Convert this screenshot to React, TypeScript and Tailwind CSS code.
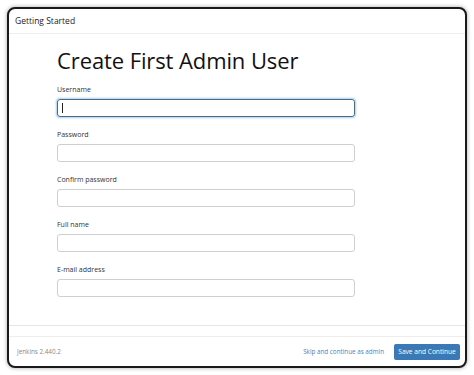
import React from "react";

const fields = [
  { label: "Username", focused: true },
  { label: "Password" },
  { label: "Confirm password" },
  { label: "Full name" },
  { label: "E-mail address" },
];

export default function App() {
  return (
    <div
      className="w-[474px] h-[375px] bg-white p-[7px]"
      style={{ fontFamily: '"Open Sans", "Noto Sans", sans-serif' }}
    >
      <div className="h-full border-2 border-[#1a1a1a] rounded-[8px] flex flex-col overflow-hidden shadow-[0_0_4px_rgba(0,0,0,0.35)] bg-white">
        <div className="h-[25px] shrink-0 border-b border-[#eeeeee] px-[6px] flex items-center text-[8.5px] text-[#222]">
          Getting Started
        </div>
        <div className="flex-1 border-b border-[#e6e6e6] pl-[48px] pt-[8px]">
          <div className="h-[36px] leading-[36px] text-[22px] text-[#111] tracking-[-0.1px]">
            Create First Admin User
          </div>
          <div className="mt-[7px] flex flex-col">
            {fields.map((f) => (
              <div key={f.label} className="mb-[13px] w-[298px]">
                <div className="h-[10px] leading-[10px] text-[7px] font-medium text-[#333]">
                  {f.label}
                </div>
                {f.focused ? (
                  <div className="mt-[4px] h-[18px] rounded-[3px] border border-[#4d6b80] shadow-[0_0_2px_1px_rgba(102,175,233,0.6)] flex items-center">
                    <span className="ml-[4px] w-px h-[10px] bg-[#222]" />
                  </div>
                ) : (
                  <div className="mt-[4px] h-[18px] rounded-[3px] border border-[#cfcfcf]" />
                )}
              </div>
            ))}
          </div>
        </div>
        <div className="h-[10px] shrink-0" />
        <div className="h-[30px] shrink-0 border-t border-[#eeeeee] flex items-center pl-[8px] pr-[5px]">
          <span className="text-[6.3px] text-[#888]">Jenkins 2.440.2</span>
          <span className="ml-auto text-[6.3px] text-[#4a7fc0]">Skip and continue as admin</span>
          <div className="ml-[10px] w-[66px] h-[16px] rounded-[2px] bg-[#3b78b6] text-white text-[6.6px] flex items-center justify-center">
            Save and Continue
          </div>
        </div>
      </div>
    </div>
  );
}
